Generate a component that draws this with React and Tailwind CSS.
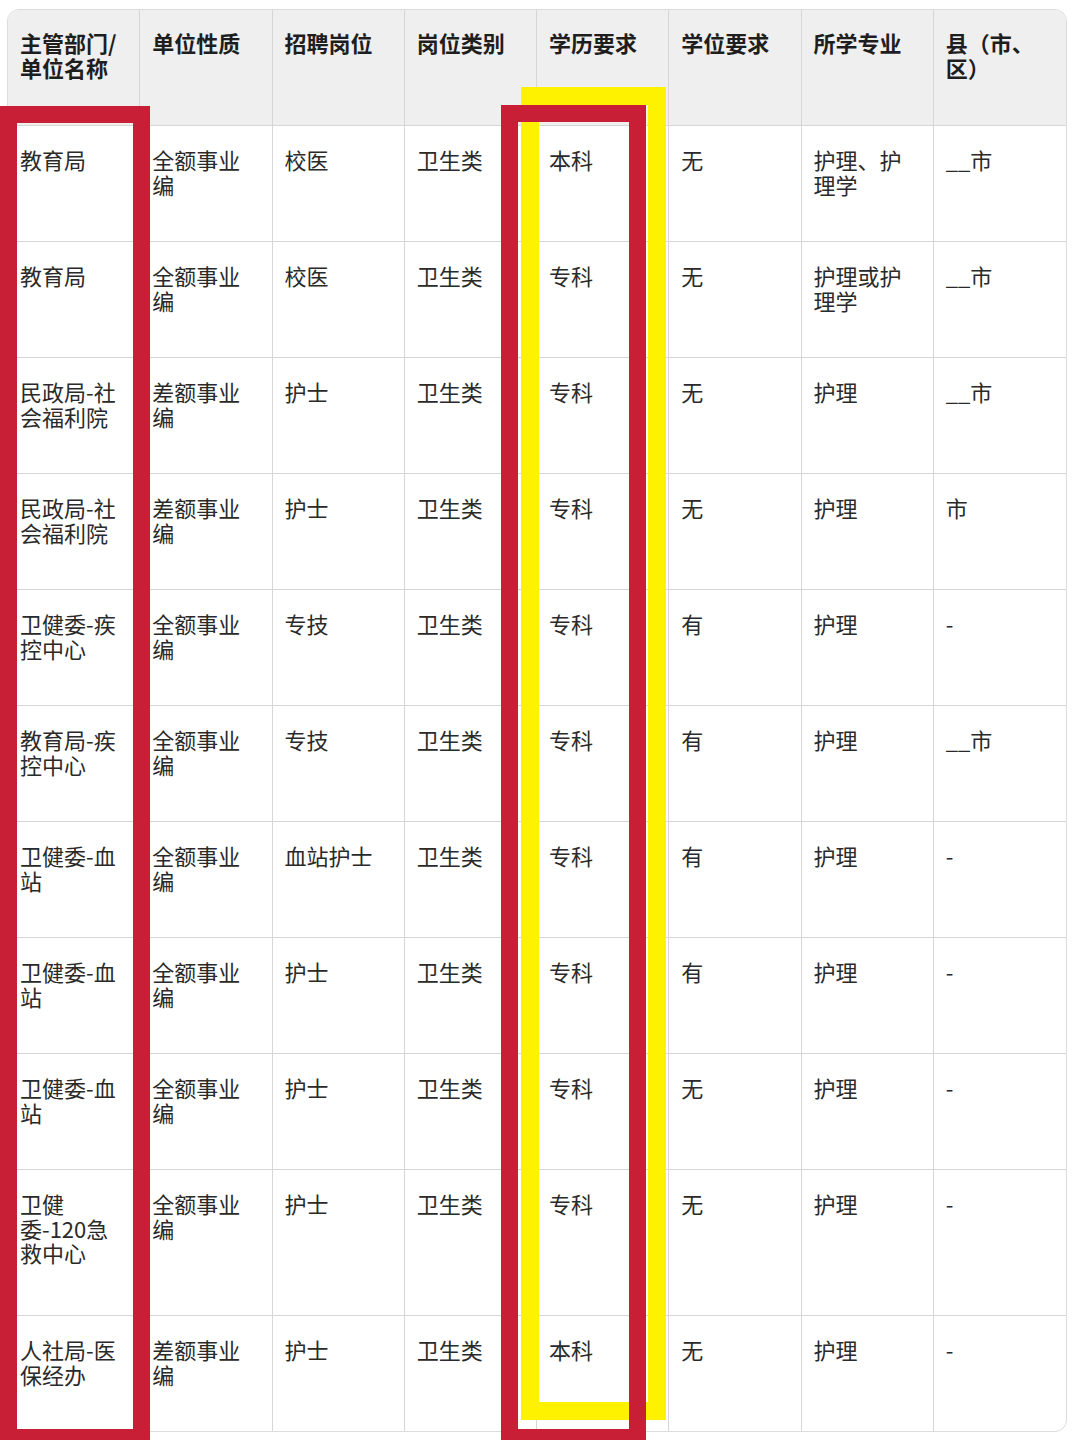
import React from "react";

const headers = [
  ["主管部门/", "单位名称"],
  ["单位性质"],
  ["招聘岗位"],
  ["岗位类别"],
  ["学历要求"],
  ["学位要求"],
  ["所学专业"],
  ["县（市、", "区）"],
];

const rows = [
  { h: "h-[116px]", cells: [["教育局"], ["全额事业", "编"], ["校医"], ["卫生类"], ["本科"], ["无"], ["护理、护", "理学"], ["__市"]] },
  { h: "h-[116px]", cells: [["教育局"], ["全额事业", "编"], ["校医"], ["卫生类"], ["专科"], ["无"], ["护理或护", "理学"], ["__市"]] },
  { h: "h-[116px]", cells: [["民政局-社", "会福利院"], ["差额事业", "编"], ["护士"], ["卫生类"], ["专科"], ["无"], ["护理"], ["__市"]] },
  { h: "h-[116px]", cells: [["民政局-社", "会福利院"], ["差额事业", "编"], ["护士"], ["卫生类"], ["专科"], ["无"], ["护理"], ["市"]] },
  { h: "h-[116px]", cells: [["卫健委-疾", "控中心"], ["全额事业", "编"], ["专技"], ["卫生类"], ["专科"], ["有"], ["护理"], ["-"]] },
  { h: "h-[116px]", cells: [["教育局-疾", "控中心"], ["全额事业", "编"], ["专技"], ["卫生类"], ["专科"], ["有"], ["护理"], ["__市"]] },
  { h: "h-[116px]", cells: [["卫健委-血", "站"], ["全额事业", "编"], ["血站护士"], ["卫生类"], ["专科"], ["有"], ["护理"], ["-"]] },
  { h: "h-[116px]", cells: [["卫健委-血", "站"], ["全额事业", "编"], ["护士"], ["卫生类"], ["专科"], ["有"], ["护理"], ["-"]] },
  { h: "h-[116px]", cells: [["卫健委-血", "站"], ["全额事业", "编"], ["护士"], ["卫生类"], ["专科"], ["无"], ["护理"], ["-"]] },
  { h: "h-[146px]", cells: [["卫健", "委-120急", "救中心"], ["全额事业", "编"], ["护士"], ["卫生类"], ["专科"], ["无"], ["护理"], ["-"]] },
  { h: "h-[115px]", cells: [["人社局-医", "保经办"], ["差额事业", "编"], ["护士"], ["卫生类"], ["本科"], ["无"], ["护理"], ["-"]] },
];

const Lines = ({ lines }) =>
  lines.map((l, i) => (
    <div key={i} className="whitespace-nowrap">
      {l}
    </div>
  ));

export default function App() {
  return (
    <div
      className="relative w-[1080px] h-[1440px] overflow-hidden bg-white"
      style={{ fontFamily: '"Noto Sans CJK SC", "Noto Sans", sans-serif' }}
    >
      <div className="pt-[9px] pl-[7px]">
        {/* 表格 */}
        <div className="w-[1060px] rounded-xl border border-[#dcdcdc] overflow-hidden text-[22px] leading-[24.5px]">
          <div className="grid grid-cols-8 h-[116px] bg-[#efefef] font-bold text-[#1e1e1e]">
            {headers.map((h, i) => (
              <div
                key={i}
                className={`pt-[20px] pl-[12px] border-b border-[#d6d6d6] ${i < 7 ? "border-r" : ""}`}
              >
                <Lines lines={h} />
              </div>
            ))}
          </div>
          {rows.map((r, ri) => (
            <div key={ri} className={`grid grid-cols-8 ${r.h} text-[#2a2a2a]`}>
              {r.cells.map((c, ci) => (
                <div
                  key={ci}
                  className={`pt-[21px] pl-[12px] border-[#d6d6d6] ${ci < 7 ? "border-r" : ""} ${ri < rows.length - 1 ? "border-b" : ""}`}
                >
                  <Lines lines={c} />
                </div>
              ))}
            </div>
          ))}
        </div>
      </div>

      {/* 标注框 */}
      <div className="absolute left-[521px] top-[87px] w-[145px] h-[1333px] border-[18px] border-[#fff200]" />
      <div className="absolute left-0 top-[106px] w-[150px] h-[1340px] border-[17px] border-[#c81f36]" />
      <div className="absolute left-[501px] top-[105px] w-[145px] h-[1341px] border-[17px] border-[#c81f36]" />
    </div>
  );
}
